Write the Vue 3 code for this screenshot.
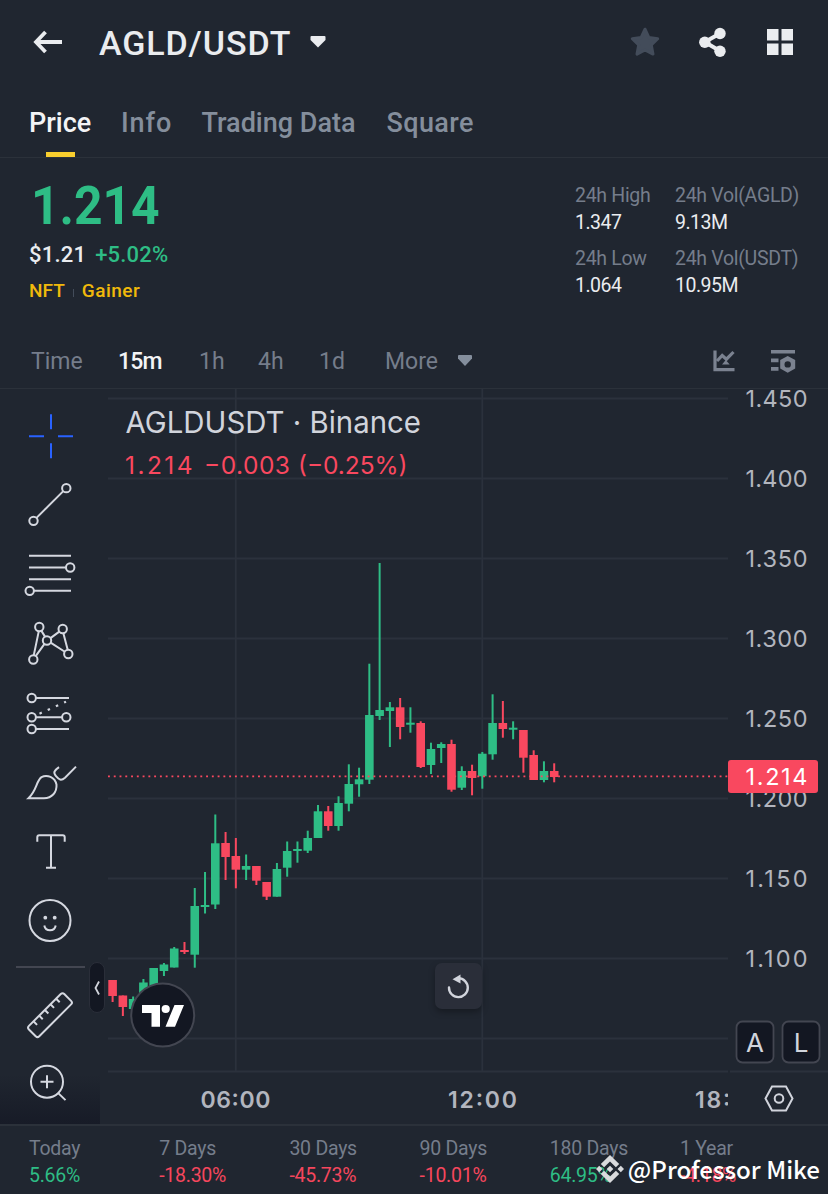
<template>
  <div class="screen">
    <header class="top-bar">
      <svg class="back" width="30" height="24" viewBox="0 0 30 24" fill="none" stroke="#eaecef" stroke-width="3.8">
        <path d="M29 12H4M12.5 2 3 12l9.500 10"/>
      </svg>
      <h1 class="pair">AGLD/USDT</h1>
      <svg class="caret" width="16" height="12" viewBox="0 0 16 12" fill="#eaecef">
        <path d="M1.500 0h13q1 0 1 1v3L8 11.500.500 4V1q0-1 1-1z"/>
      </svg>
      <div class="actions">
        <svg width="30" height="30" viewBox="0 0 30 30" fill="#434c5a" stroke="#434c5a" stroke-width="3" stroke-linejoin="round">
          <path d="m15 2.200 3.900 8.400 8.800 1.100-6.400 6.200 1.700 9.200L15 22.900l-8 4.200 1.700-9.200-6.400-6.200 8.800-1.100z"/>
        </svg>
        <svg width="30" height="30" viewBox="0 0 30 30" fill="#eaecef">
          <path d="M5.800 15 21 6.500M5.800 15 21 24" stroke="#eaecef" stroke-width="4"/>
          <circle cx="5.800" cy="15.300" r="5.700"/>
          <circle cx="21" cy="6.500" r="5.700"/>
          <circle cx="21" cy="24.200" r="5.700"/>
        </svg>
        <svg width="26" height="26" viewBox="0 0 26 26" fill="#eaecef">
          <path d="M0 0h11.500v11.500H0zM14.500 0H26v11.500H14.500zM0 14.500h11.500V26H0zM14.500 14.500H26V26H14.500z"/>
        </svg>
      </div>
    </header>

    <nav class="tabs">
      <a v-for="t in tabs" :key="t" class="tab" :class="{ active: t === 'Price' }"><span>{{ t }}</span></a>
    </nav>

    <section class="ticker">
      <div class="quote">
        <div class="last">1.214</div>
        <div class="fiat"><span>$1.21</span><span class="up">+5.02%</span></div>
        <div class="tags"><span>NFT</span><i></i><span>Gainer</span></div>
      </div>
      <dl class="stats">
        <div v-for="s in stats" :key="s.label">
          <dt>{{ s.label }}</dt>
          <dd>{{ s.value }}</dd>
        </div>
      </dl>
    </section>

    <nav class="intervals">
      <span v-for="i in intervals" :key="i" :class="{ active: i === '15m' }">{{ i }}</span>
      <svg class="more-caret" width="14" height="11" viewBox="0 0 14 11" fill="#848e9c">
        <path d="M1 0h12q1 0 1 1v2.500L7 11 0 3.500V1q0-1 1-1z"/>
      </svg>
      <div class="tools">
        <svg width="22" height="22" viewBox="0 0 22 22" fill="none" stroke="#7b8290" stroke-width="3.200">
          <path d="M2 .500V19.600H21.500"/>
          <path d="m4 11 5.200-5.500 4.200 3.700L20.500 2"/>
          <path d="M9 14.500 12.700 10l4 4.500z" fill="#7b8290" stroke="none"/>
        </svg>
        <svg width="25" height="23" viewBox="0 0 25 23" fill="#7b8290">
          <path d="M0 0h24v3.600H0zM0 8.500h7.500v3.700H0zM0 17h7.500v3.700H0z"/>
          <path fill-rule="evenodd" d="m16.700 6 7.500 4v8.500l-7.500 4.200-7.500-4.200V10zm0 5.200a3.200 3.200 0 1 0 0 6.400 3.200 3.200 0 0 0 0-6.400z"/>
        </svg>
      </div>
    </nav>

    <main class="chart">
      <aside class="draw-tools">
        <!-- Crosshair -->
        <svg viewBox="-50 -35 100 69" stroke="#2962ff">
          <path d="M-21 0h15M8 0h15M1-22v15M1 7v15"/>
        </svg>
        <!-- Trend line -->
        <svg viewBox="-50 -35 100 69">
          <circle cx="-16.500" cy="15.700" r="4.200"/>
          <circle cx="16.300" cy="-17" r="4.200"/>
          <path d="M-13.500 12.700 13.300-14"/>
        </svg>
        <!-- Fib retracement -->
        <svg viewBox="-50 -35 100 69">
          <path d="M-21-19.300h42M-21-7.600h37M-21 4.100h42M-16 15.700h37"/>
          <circle cx="20.200" cy="-7.600" r="4.200"/>
          <circle cx="-20.300" cy="15.700" r="4.200"/>
        </svg>
        <!-- Pattern -->
        <svg viewBox="-50 -35 100 69">
          <path d="M-11.200-13-16.200 11M-8.700-13.500-5-7.500M-14.300 12-5.500-.300M.500-6 9.300-12.500M.600-1.600 14.800 7.600M13.300-11.100 17.700 5.700"/>
          <circle cx="-10.700" cy="-17.200" r="4.200"/>
          <circle cx="12.700" cy="-15.200" r="4.200"/>
          <circle cx="-3" cy="-3.600" r="4.200"/>
          <circle cx="-16.700" cy="15.400" r="4.200"/>
          <circle cx="18.300" cy="9.800" r="4.200"/>
        </svg>
        <!-- Forecast -->
        <svg viewBox="-50 -35 100 69">
          <path d="M-14-15.200h33M-14 4.100h26M-14 15.800h33"/>
          <path d="M-10.500.500 16-11.500" stroke-dasharray="2.500 6.500" stroke-width="2.200"/>
          <circle cx="-18.300" cy="-15.200" r="4.200"/>
          <circle cx="-18.300" cy="4.100" r="4.200"/>
          <circle cx="16.300" cy="4.100" r="4.200"/>
          <circle cx="-18.300" cy="15.800" r="4.200"/>
        </svg>
        <!-- Brush -->
        <svg viewBox="-50 -35 100 69">
          <path d="M-21.500 16C-13 8-14-1-8.500-5C-3-8 5-5 6.500 2.500C7 10 2 16-6 16Z"/>
          <path d="M9-15C4-11.500 3-9.500 6-6C9-2.500 11-1 15-4.500L26-15.500"/>
        </svg>
        <!-- Text -->
        <svg viewBox="-50 -35 100 69">
          <path d="M-12.700-10.500v-4.500q0-2 2-2h23.400q2 0 2 2v4.500M1-17v32.500M-4 15.500H6"/>
        </svg>
        <!-- Emoji -->
        <svg viewBox="-50 -35 100 69">
          <circle cx="0" cy="-.600" r="20.500"/>
          <circle class="dot" cx="-4.700" cy="-3.500" r="1.900"/>
          <circle class="dot" cx="4.700" cy="-3.500" r="1.900"/>
          <path d="M-5.700 4.300a5.800 5.800 0 0 0 11.400 0"/>
        </svg>
        <hr>
        <!-- Ruler -->
        <svg viewBox="-50 -35 100 69">
          <g transform="rotate(-45)">
            <rect x="-25" y="-7.300" width="50" height="14.600" rx="2.500"/>
            <path d="M-16-7.300v5M-8-7.300v5M0-7.300v5M8-7.300v5M16-7.300v5"/>
          </g>
        </svg>
        <!-- Zoom in -->
        <svg viewBox="-50 -35 100 69">
          <circle cx="-3" cy="-3.500" r="16"/>
          <path d="M-9.500-3.500h13M-3-10v13M8.500 8.200 15.500 15"/>
        </svg>
      </aside>

      <svg class="plot" viewBox="100 389 728 735" width="728" height="735">
        <g stroke="#2b313c" stroke-width="1.800">
          <line v-for="(p, i) in levels" :key="p" x1="108" x2="728" :y1="398.5 + i * 80" :y2="398.5 + i * 80"/>
          <line x1="108" x2="728" y1="1038.500" y2="1038.500"/>
          <line x1="235.800" x2="235.800" y1="389" y2="1071"/>
          <line x1="482.300" x2="482.300" y1="389" y2="1071"/>
          <path d="M108 1071.500h620M730 1071.500h98"/>
        </g>

        <g v-for="(c, i) in candles" :key="i" :fill="c[0] ? '#2ebd85' : '#f9485f'">
          <rect :x="cx(i) - 1" :y="c[1]" width="2" :height="c[4] - c[1]"/>
          <rect :x="cx(i) - 4.3" :y="c[2]" width="8.600" :height="c[3] - c[2]"/>
        </g>

        <line x1="108" x2="728" y1="776.400" y2="776.400" stroke="#f9485f" stroke-width="1.900" stroke-dasharray="1.900 3.870"/>

        <text class="symbol" x="125.500" y="433" textLength="295.500" lengthAdjust="spacingAndGlyphs">AGLDUSDT · Binance</text>
        <g class="change">
          <text x="125" y="474" textLength="67.500">1.214</text>
          <text x="204" y="474" textLength="86">−0.003</text>
          <text x="298" y="474" textLength="109.500">(−0.25%)</text>
        </g>

        <g class="axis">
          <text v-for="(p, i) in levels" :key="p" x="745.500" :y="406.5 + i * 80" textLength="62">{{ p }}</text>
        </g>
        <rect x="728" y="760" width="90" height="33" rx="3" fill="#f9485f"/>
        <text class="axis current" x="745.500" y="784.500" textLength="62">1.214</text>

        <clipPath id="time-clip"><rect x="100" y="1072" width="628" height="52"/></clipPath>
        <g class="time" clip-path="url(#time-clip)">
          <text x="200.500" y="1107.500" textLength="70">06:00</text>
          <text x="448" y="1107.500" textLength="69">12:00</text>
          <text x="695" y="1107.500" textLength="69">18:00</text>
        </g>

        <!-- TradingView badge -->
        <circle cx="162.700" cy="1015" r="31.500" fill="#131722" stroke="#434651" stroke-width="2"/>
        <path fill="#fff" d="M142 1005h18v21.700h-8.500V1013H142zM174.500 1005h9.500l-9 21.700h-9.500z"/>
        <circle cx="165.700" cy="1009" r="4.100" fill="#fff"/>

        <!-- Reset button -->
        <rect class="reset" x="435" y="963" width="47" height="46" rx="7" fill="#2a2e39"/>
        <path d="M449 987.500a9.400 9.400 0 1 0 9.400-9.200h-1" fill="none" stroke="#d1d4dc" stroke-width="2.400" stroke-linecap="round"/>
        <path d="m452.500 979.300 8-4.700v9z" fill="#d1d4dc"/>

        <g class="scale-btn">
          <rect x="736.500" y="1021.500" width="37" height="41" rx="6"/>
          <rect x="782.500" y="1021.500" width="37" height="41" rx="6"/>
          <text x="755" y="1051.500">A</text>
          <text x="801" y="1051.500">L</text>
        </g>

        <g fill="none" stroke="#d1d4dc" stroke-width="2">
          <path d="M765.500 1098.500 772 1086.500h14l6.500 12-6.500 12h-14z"/>
          <circle cx="779" cy="1098.500" r="4.300"/>
        </g>
      </svg>

      <button class="collapse" aria-label="Hide drawing tools">
        <svg width="6" height="14" viewBox="0 0 6 14" fill="none" stroke="#d1d4dc" stroke-width="1.800"><path d="M5 .500 1.500 7 5 13.500"/></svg>
      </button>
    </main>

    <footer class="performance">
      <div v-for="p in performance" :key="p.label">
        <span>{{ p.label }}</span>
        <b :class="p.value[0] === '-' ? 'down' : 'up'">{{ p.value }}</b>
      </div>
    </footer>

    <div class="watermark">
      <svg width="28" height="28" viewBox="0 0 28 28" fill="#d9dadc">
        <path d="m14 0 9.200 9-3.300 3.300L14 6.500l-5.900 5.800L4.800 9zM3.200 10.700 6.500 14l-3.300 3.300L0 14zM24.800 10.700 28 14l-3.200 3.300-3.300-3.300zM14 10.700l3.300 3.300-3.300 3.300-3.300-3.300zM8.100 15.700l5.900 5.800 5.900-5.800 3.300 3.300L14 28l-9.200-9z"/>
      </svg>
      <span>@Professor Mike</span>
    </div>
  </div>
</template>

<script setup>
const tabs = ['Price', 'Info', 'Trading Data', 'Square']
const intervals = ['Time', '15m', '1h', '4h', '1d', 'More']

const stats = [
  { label: '24h High', value: '1.347' },
  { label: '24h Vol(AGLD)', value: '9.13M' },
  { label: '24h Low', value: '1.064' },
  { label: '24h Vol(USDT)', value: '10.95M' },
]

const levels = ['1.450', '1.400', '1.350', '1.300', '1.250', '1.200', '1.150', '1.100']

const performance = [
  { label: 'Today', value: '5.66%' },
  { label: '7 Days', value: '-18.30%' },
  { label: '30 Days', value: '-45.73%' },
  { label: '90 Days', value: '-10.01%' },
  { label: '180 Days', value: '64.95%' },
  { label: '1 Year', value: '-4.18%' },
]

// [rising, high, body top, body bottom, low] in plot units
const candles = [
  [0, 980, 980, 996, 1002],
  [0, 995.5, 995.5, 1007, 1016],
  [1, 996.5, 999, 1009, 1009],
  [1, 979, 982.5, 999, 999],
  [1, 968, 968, 987, 987],
  [1, 963, 964.5, 971, 976],
  [1, 947, 948.5, 967.5, 967.5],
  [0, 942, 950, 952, 954],
  [1, 888, 906, 954.7, 967.7],
  [1, 872, 905, 907, 913.5],
  [1, 814.5, 843.3, 904.5, 909],
  [0, 832, 843, 857, 880],
  [0, 838, 856, 869.7, 888.3],
  [1, 854.5, 866, 869.7, 880],
  [0, 866, 866, 880.7, 885],
  [0, 882, 882, 896.7, 900],
  [1, 863, 869, 896.7, 896.7],
  [1, 841.5, 851, 867.7, 876.7],
  [1, 841.5, 849, 851, 862.7],
  [1, 830.7, 838, 850.7, 853],
  [1, 805, 811.3, 838, 838],
  [0, 806, 811.3, 826, 830.7],
  [1, 796.3, 803, 826, 830.7],
  [1, 764.3, 784, 803.7, 811.3],
  [1, 767.7, 779.3, 784.3, 796.7],
  [1, 663.7, 715, 779.7, 784],
  [1, 563, 710, 716, 720],
  [1, 702, 707.3, 711, 747],
  [0, 698, 707.3, 727, 739.3],
  [1, 707.3, 722.7, 724.7, 732.7],
  [0, 721.3, 723, 767, 768],
  [1, 742.7, 749, 765, 774],
  [1, 742.3, 744, 748, 763],
  [0, 739.7, 744, 789.7, 791.7],
  [1, 766.3, 771, 787.7, 790],
  [0, 764.7, 771, 778, 795.3],
  [1, 752, 753.7, 776.3, 788.7],
  [1, 694.3, 723, 754.3, 759.7],
  [0, 701, 723, 729, 737.7],
  [1, 721.3, 727.7, 729.7, 739.3],
  [0, 730, 730, 757.7, 772.7],
  [0, 750.3, 755, 780, 780],
  [1, 761.3, 771, 780, 782.3],
  [0, 763.3, 771, 777, 782.3],
]

function cx(i) {
  return 112.6 + i * 10.27
}
</script>

<style>
body {
  background: #202630;
}
</style>

<style scoped>
.screen {
  position: relative;
  width: 828px;
  height: 1194px;
  overflow: hidden;
  background: #202630;
  color: #eaecef;
  font-family: Roboto, "Noto Sans", sans-serif;
}
.up { color: #2ebd85; }
.down { color: #f6465d; }

.top-bar {
  display: flex;
  align-items: center;
  height: 84px;
  padding: 0 35px 0 33px;
}
.back { margin-right: 36px; }
.pair {
  margin: 2px 20px 0 0;
  width: 191px;
  font-size: 34px;
  font-weight: 500;
  letter-spacing: 0.9px;
  white-space: nowrap;
}
.actions {
  display: flex;
  align-items: center;
  gap: 38.500px;
  margin-left: auto;
}

.tabs {
  display: grid;
  grid-template-columns: 92px 80.500px 185px auto;
  height: 73px;
  padding-left: 29px;
  border-bottom: 1px solid #2b313a;
}
.tab {
  display: flex;
  flex-direction: column;
  padding-top: 19px;
  width: max-content;
  font-size: 27px;
  font-weight: 500;
  line-height: 40px;
  color: #848e9c;
}
.tab:nth-child(2) { letter-spacing: 0.9px; }
.tab:last-child { letter-spacing: 0.4px; }
.tab.active { color: #f3f4f6; }
.tab.active::after {
  content: "";
  align-self: center;
  margin-top: 9px;
  width: 29px;
  height: 5px;
  background: #f8ce2e;
}

.ticker {
  display: flex;
  justify-content: space-between;
  height: 158px;
  padding: 18px 28px 0 29px;
}
.last {
  padding-left: 2px;
  font-size: 53px;
  font-weight: 700;
  line-height: 61px;
  color: #2ebd85;
  transform: scaleX(0.94);
  transform-origin: left;
}
.fiat {
  display: flex;
  gap: 9px;
  font-size: 22px;
  font-weight: 500;
  line-height: 36px;
  letter-spacing: 0.2px;
}
.tags {
  display: flex;
  align-items: center;
  font-size: 19px;
  font-weight: 500;
  line-height: 36px;
  color: #f0b90b;
}
.tags span:last-child { letter-spacing: 0.500px; }
.tags i {
  margin: 4px 8px 0;
  width: 1px;
  height: 8px;
  background: #434c5a;
}
.stats {
  display: grid;
  grid-template-columns: 100px 125px;
  align-content: start;
  row-gap: 9px;
  margin: 6px 0 0;
  font-size: 19.500px;
  line-height: 27px;
  letter-spacing: -0.3px;
  white-space: nowrap;
}
.stats dt { color: #757d8b; }
.stats dd {
  margin: 0;
  letter-spacing: -0.500px;
}

.intervals {
  display: grid;
  grid-template-columns: 88px 80px 59px 61px 66px 73px auto 1fr;
  align-items: center;
  height: 54px;
  padding: 0 32px 0 31px;
  border-bottom: 1px solid #2b313a;
  font-size: 23px;
  color: #757d8b;
}
.intervals .active {
  margin-left: -1px;
  font-weight: 500;
  letter-spacing: -0.800px;
  color: #f3f4f6;
}
.more-caret { margin: -2px 0 0; }
.tools {
  display: flex;
  align-items: center;
  justify-content: flex-end;
  gap: 36.500px;
}

.chart {
  position: relative;
  display: flex;
  height: 735px;
}
.draw-tools {
  display: flex;
  flex-direction: column;
  width: 100px;
  padding-top: 12px;
  box-sizing: border-box;
  background: linear-gradient(transparent 685px, #171b27 735px);
}
.draw-tools svg {
  flex: none;
  width: 100px;
  height: 69.300px;
  fill: none;
  stroke: #d5d8e0;
  stroke-width: 2;
}
.draw-tools svg[stroke] { stroke: #2962ff; }
.draw-tools .dot {
  fill: #d5d8e0;
  stroke: none;
}
.draw-tools hr {
  flex: none;
  margin: 11px 15px 12px 16px;
  height: 2px;
  border: none;
  background: #434651;
}
.plot {
  flex: none;
  font-family: Inter, "Liberation Sans", sans-serif;
}
.symbol {
  font-size: 30px;
  fill: #d1d4dc;
}
.change {
  font-size: 24.500px;
  fill: #f9485f;
}
.axis {
  font-size: 23.500px;
  fill: #b2b5be;
}
.axis.current { fill: #fff; }
.time {
  font-size: 23px;
  font-weight: 600;
  fill: #b2b5be;
}
.reset { filter: drop-shadow(0 3px 3px rgba(0, 0, 0, 0.3)); }
.scale-btn rect {
  fill: #131722;
  stroke: #434651;
  stroke-width: 1.800;
}
.scale-btn text {
  font-size: 26px;
  text-anchor: middle;
  fill: #d1d4dc;
}
.collapse {
  position: absolute;
  top: 573px;
  left: 89px;
  display: flex;
  align-items: center;
  justify-content: center;
  width: 16px;
  height: 51px;
  padding: 0;
  border: 1px solid #2a2e39;
  border-radius: 8px;
  background: #131722;
}

.performance {
  display: grid;
  grid-template-columns: repeat(6, 130.200px);
  padding: 9px 0 0 29px;
  border-top: 2px solid #2b313a;
  font-size: 19.500px;
  line-height: 27px;
  letter-spacing: -0.250px;
}
.performance span {
  display: block;
  color: #757d8b;
}
.performance b { font-weight: 400; }

.watermark {
  position: absolute;
  right: 8px;
  bottom: 8px;
  display: flex;
  align-items: center;
  gap: 4px;
  font-family: "Noto Sans CJK SC", sans-serif;
  font-size: 24.100px;
  font-weight: 500;
  line-height: 34px;
  color: #fff;
  white-space: nowrap;
}
</style>
